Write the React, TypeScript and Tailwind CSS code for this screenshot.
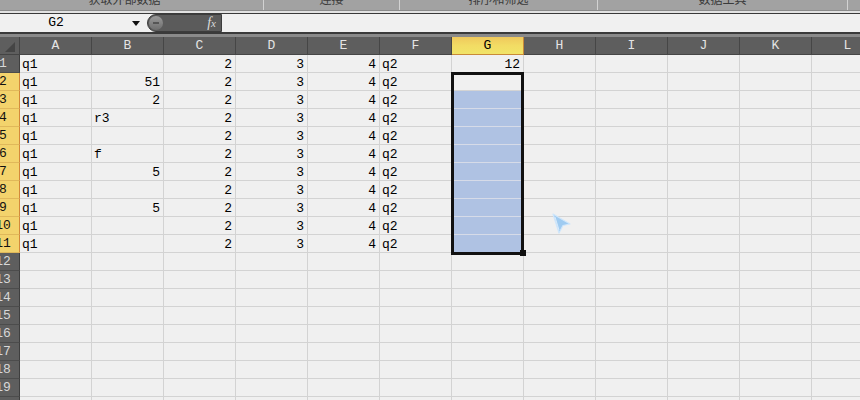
import React from "react";

const COLS = ["A", "B", "C", "D", "E", "F", "G", "H", "I", "J", "K", "L"];
const ROW_COUNT = 20;

type Cell = string | number | null;

// sheet contents, columns A..G
const DATA: Cell[][] = [
  ["q1", null, 2, 3, 4, "q2", 12],
  ["q1", 51, 2, 3, 4, "q2", null],
  ["q1", 2, 2, 3, 4, "q2", null],
  ["q1", "r3", 2, 3, 4, "q2", null],
  ["q1", null, 2, 3, 4, "q2", null],
  ["q1", "f", 2, 3, 4, "q2", null],
  ["q1", 5, 2, 3, 4, "q2", null],
  ["q1", null, 2, 3, 4, "q2", null],
  ["q1", 5, 2, 3, 4, "q2", null],
  ["q1", null, 2, 3, 4, "q2", null],
  ["q1", null, 2, 3, 4, "q2", null],
];

const GROUPS = [
  { label: "获取外部数据", w: "w-[264px]", pad: "pr-[14px]" },
  { label: "连接", w: "w-[136px]", pad: "" },
  { label: "排序和筛选", w: "w-[198px]", pad: "" },
  { label: "数据工具", w: "w-[250px]", pad: "" },
];

const mono = "font-['Liberation_Mono','DejaVu_Sans_Mono',monospace]";

function RibbonStrip() {
  return (
    <div className="flex h-[10px] overflow-hidden bg-[#a2a2a2]">
      {GROUPS.map((g) => (
        <div
          key={g.label}
          className={`${g.w} ${g.pad} shrink-0 border-r border-[#d2d2d2] text-center`}
        >
          <div className="-mt-[8px] font-['Noto_Sans_CJK_SC',sans-serif] text-[12px] leading-[14px] text-[#3a3a3a]">
            {g.label}
          </div>
        </div>
      ))}
      <div className="flex-1" />
    </div>
  );
}

function FormulaBar() {
  return (
    <div className="flex h-[18px] bg-[#f0f0f0]">
      <div className="flex w-[147px] items-center">
        <div className={`${mono} w-[112px] text-center text-[13px] leading-[18px] text-black`}>
          G2
        </div>
        <div className="flex-1" />
        <svg width="8" height="5" viewBox="0 0 8 5" className="mr-[7px]">
          <path d="M0 0 H8 L4 5 Z" fill="#111" />
        </svg>
      </div>
      <div className="flex w-[75px] items-center rounded-l-full border border-[#3c3c3c] bg-[#5b5b5b]">
        <div className="ml-[1px] flex h-[14px] w-[14px] items-center justify-center rounded-full bg-gradient-to-b from-[#9a9a9a] to-[#6e6e6e]">
          <div className="h-[2px] w-[6px] bg-[#555]" />
        </div>
        <div className="flex-1" />
        <span className="mr-[5px] font-['Liberation_Serif',serif] text-[14px] italic leading-[16px] text-[#dcdcdc]">
          f<span className="text-[11px]">x</span>
        </span>
      </div>
      <div className="flex-1 bg-[#f0f0f0]" />
    </div>
  );
}

function RowHeader({ n }: { n: number }) {
  const hot = n >= 2 && n <= 11;
  return (
    <div
      className={
        hot
          ? "h-[18px] overflow-hidden border-r border-b border-r-[#d4893a] border-b-[#e0b85a] bg-[#f3d36c] text-[#111]"
          : "h-[18px] overflow-hidden border-r border-b border-r-[#3e3e3e] border-b-[#4c4c4c] bg-[#5e5e5e] text-[#d8d8d8]"
      }
    >
      <div className={`${mono} -ml-[14px] w-[34px] text-center text-[13px] leading-[18px]`}>{n}</div>
    </div>
  );
}

function DataCell({ value, col, row }: { value: Cell; col: number; row: number }) {
  const picked = col === 6 && row >= 3 && row <= 11;
  const isNum = typeof value === "number";
  return (
    <div
      className={`${mono} h-[18px] overflow-hidden whitespace-nowrap border-r border-b text-[13px] leading-[19px] text-black ${
        picked ? "border-[#d6dbe8] bg-[#afc2e3]" : "border-[#d3d3d3] bg-[#f0f0f0]"
      } ${isNum ? "pr-[3px] text-right" : "pl-[2px] text-left"}`}
    >
      {value ?? ""}
    </div>
  );
}

function Sheet() {
  return (
    <div className="relative grid grid-cols-[20px_repeat(12,72px)] overflow-hidden">
      {/* header row */}
      <div className="relative h-[18px] border-r border-b border-[#444] bg-[#5e5e5e]">
        <svg width="10" height="10" viewBox="0 0 10 10" className="absolute right-[4px] bottom-[2px]">
          <path d="M10 0 V10 H0 Z" fill="#454545" />
        </svg>
      </div>
      {COLS.map((c) =>
        c === "G" ? (
          <div
            key={c}
            className={`${mono} h-[18px] border-r border-b border-[#c98a38] bg-gradient-to-b from-[#efc85c] via-[#f2dc64] to-[#f1e468] text-center text-[13px] leading-[17px] text-black`}
          >
            {c}
          </div>
        ) : (
          <div
            key={c}
            className={`${mono} h-[18px] border-r border-b border-[#464646] bg-[#5e5e5e] text-center text-[13px] leading-[17px] text-[#e4e4e4]`}
          >
            {c}
          </div>
        )
      )}

      {Array.from({ length: ROW_COUNT }, (_, r) => (
        <React.Fragment key={r}>
          <RowHeader n={r + 1} />
          {COLS.map((_, c) => (
            <DataCell key={c} value={DATA[r]?.[c] ?? null} col={c} row={r + 1} />
          ))}
        </React.Fragment>
      ))}

      {/* selection frame G2:G11 + fill handle */}
      <div className="pointer-events-none absolute top-[35px] left-[451px] h-[183px] w-[73px] border-[3px] border-[#111]" />
      <div className="pointer-events-none absolute top-[213px] left-[520px] h-[6px] w-[6px] bg-[#111]" />

      {/* mouse pointer */}
      <svg
        width="20"
        height="22"
        viewBox="0 0 20 22"
        className="pointer-events-none absolute top-[176px] left-[552px]"
      >
        <path d="M1 1 L18 11 L11 12.5 L7 20 Z" fill="#9fcbf1" stroke="#cfe6fb" strokeWidth="1.2" strokeLinejoin="round" />
        <path d="M3 4 L7 17" stroke="#e6f3fe" strokeWidth="1" opacity="0.8" />
      </svg>
    </div>
  );
}

export default function App() {
  return (
    <div className="h-[400px] w-[860px] overflow-hidden bg-[#f0f0f0]">
      <RibbonStrip />
      <div className="h-[1px] bg-[#8a8a8a]" />
      <div className="h-[2px] bg-[#e2e2e2]" />
      <div className="h-[1px] bg-[#3a3a3a]" />
      <FormulaBar />
      <div className="h-[2px] bg-[#3a3a3a]" />
      <div className="h-[3px] bg-[#8a8a8a]" />
      <Sheet />
    </div>
  );
}
